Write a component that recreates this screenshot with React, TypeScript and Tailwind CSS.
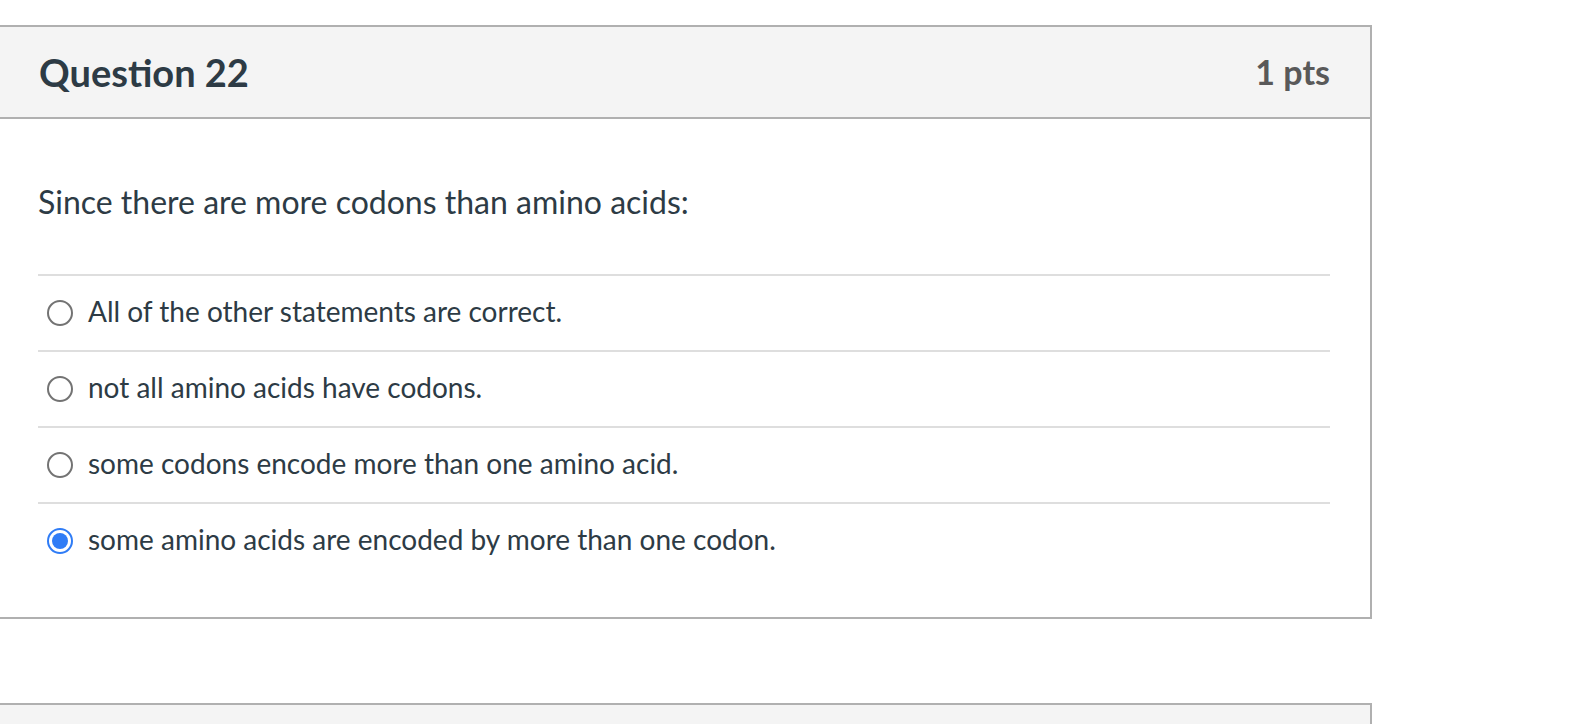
import React from "react";

const OPTIONS = [
  { id: "a", label: "All of the other statements are correct.", checked: false },
  { id: "b", label: "not all amino acids have codons.", checked: false },
  { id: "c", label: "some codons encode more than one amino acid.", checked: false },
  { id: "d", label: "some amino acids are encoded by more than one codon.", checked: true },
];

function Radio({ checked }: { checked: boolean }) {
  if (checked) {
    return (
      <span className="w-[26px] h-[26px] shrink-0 rounded-full border-[2px] border-[#2f7cf6] bg-white flex items-center justify-center">
        <span className="w-[16px] h-[16px] rounded-full bg-[#2f7cf6]" />
      </span>
    );
  }
  return (
    <span className="w-[26px] h-[26px] shrink-0 rounded-full border-[2px] border-[#737373] bg-white" />
  );
}

export default function App() {
  return (
    <div className="min-h-[724px] bg-white pt-[25px] font-['Lato','Liberation_Sans',sans-serif] text-[#2d3b45]">
      {/* Question card */}
      <div className="ml-[-2px] w-[1374px] border-2 border-[#b0b0b0]">
        <div className="h-[92px] bg-[#f4f4f4] border-b-2 border-[#b0b0b0] flex items-center justify-between pl-[39px] pr-[40px]">
          <h2 className="text-[38px] leading-[44px] font-bold">Question 22</h2>
          <span className="text-[34px] leading-[44px] font-bold text-[#595959]">1 pts</span>
        </div>
        <div className="pl-[38px] pr-[40px] pt-[63px] pb-[39px]">
          <p className="text-[32px] leading-[40px]">Since there are more codons than amino acids:</p>
          <div className="mt-[52px]">
            {OPTIONS.map((opt) => (
              <label
                key={opt.id}
                className="flex items-center h-[76px] border-t-2 border-[#dedede] pl-[9px] gap-[15px] text-[28px] leading-[34px]"
              >
                <Radio checked={opt.checked} />
                <span className="-mt-[4px]">{opt.label}</span>
              </label>
            ))}
          </div>
        </div>
      </div>

      {/* Next card peeking in */}
      <div className="mt-[84px] ml-[-2px] w-[1374px] h-[40px] border-2 border-[#b0b0b0] bg-[#f4f4f4]" />
    </div>
  );
}
